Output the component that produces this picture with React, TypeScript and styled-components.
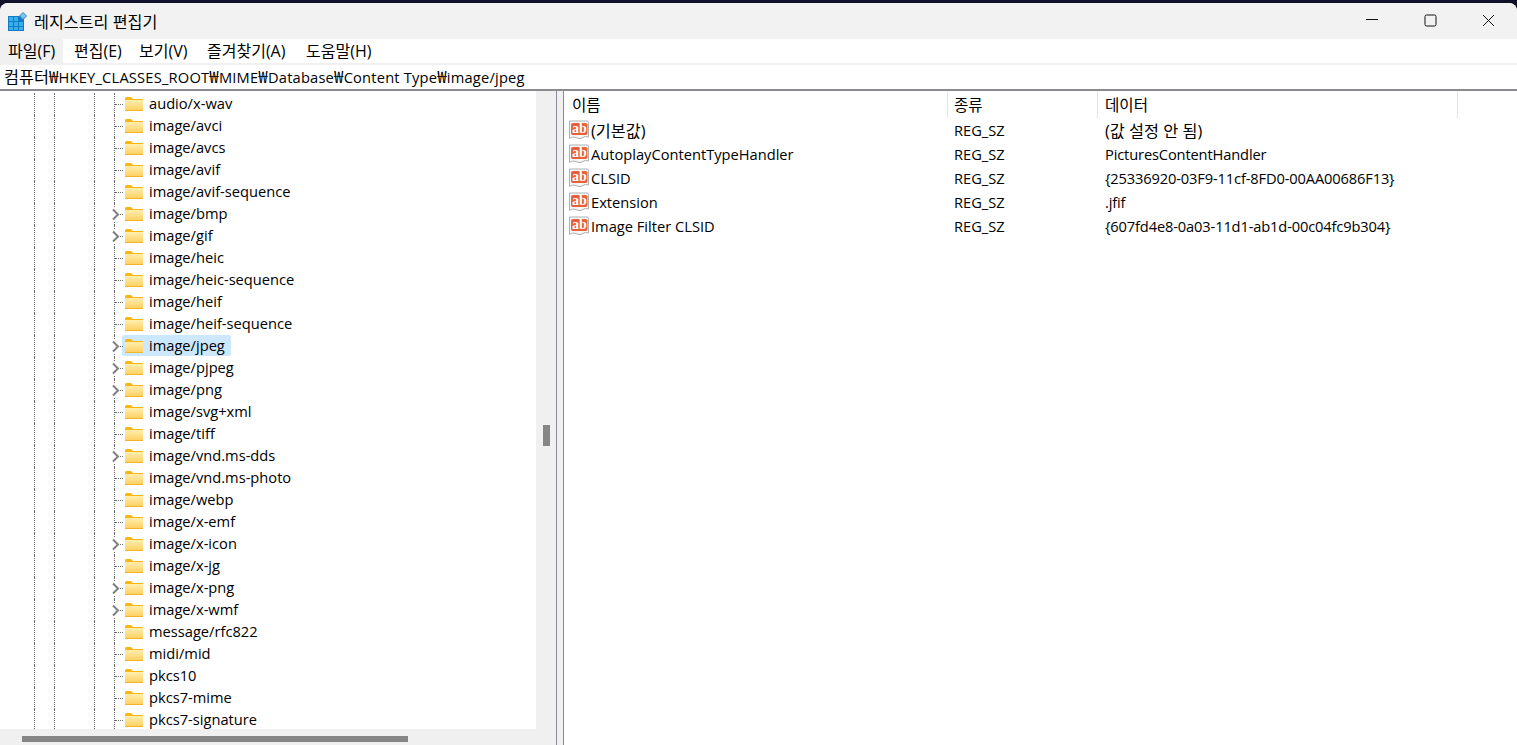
import React from 'react';
import styled, { createGlobalStyle } from 'styled-components';

const UI_FONT = `"Open Sans", "Noto Sans CJK KR", "Noto Sans", sans-serif`;

const GlobalStyle = createGlobalStyle`
    html, body, #root {
        margin: 0;
        height: 100%;
        overflow: hidden;
    }
    body {
        font-family: ${UI_FONT};
        color: #000;
        background: #101028;
    }
`

const Screen = styled.div`
    height: 100vh;
    padding-top: 3px;
    box-sizing: border-box;
    display: flex;
    flex-direction: column;
`

const Window = styled.div`
    flex: 1;
    min-height: 0;
    display: flex;
    flex-direction: column;
    background: #fff;
    border-radius: 8px 8px 0 0;
`

const TitleBar = styled.div`
    height: 36px;
    flex: none;
    display: flex;
    align-items: center;
    background: #f2f2f2;
    border-radius: 8px 8px 0 0;
    padding-left: 8px;
`

const AppTitle = styled.span`
    margin-left: 7px;
    font-size: 16.2px;
`

const WindowControls = styled.div`
    margin-left: auto;
    display: flex;
    height: 100%;
`

const WindowButton = styled.div<{ $width: number }>`
    width: ${p => p.$width}px;
    display: flex;
    align-items: center;
    justify-content: center;
    padding-bottom: 2px;
    box-sizing: border-box;
`

const MenuBar = styled.div`
    height: 24px;
    flex: none;
    display: flex;
    gap: 3px;
    background: #fff;
    border-bottom: 2px solid #f0f0f0;
`

const MenuItem = styled.div<{ $width: number; $active?: boolean }>`
    width: ${p => p.$width}px;
    padding-left: 8px;
    box-sizing: border-box;
    font-size: 16px;
    line-height: 24px;
    white-space: nowrap;
    background: ${p => (p.$active ? '#f0f0f0' : 'transparent')};
`

const AddressBar = styled.div`
    height: 26px;
    flex: none;
    padding-left: 4px;
    font-size: 14.67px;
    letter-spacing: 0.2px;
    line-height: 24px;
    white-space: nowrap;
    border-bottom: 2px solid #8a8a92;
    box-sizing: border-box;
`

const Hangul = styled.span`
    font-size: 16.3px;
    letter-spacing: 0;
`

const Won = styled.span`
    font-size: 17px;
    line-height: 1;
`

const Main = styled.div`
    flex: 1;
    min-height: 0;
    display: flex;
`

const TreePane = styled.div`
    width: 556px;
    flex: none;
    display: flex;
    flex-direction: column;
    background: #f0f0f0;
`

const TreeBody = styled.div`
    flex: 1;
    min-height: 0;
    display: flex;
`

const TreeList = styled.div`
    flex: 1;
    min-width: 0;
    background: #fff;
    padding-top: 2px;
    overflow: hidden;
`

const VScrollTrack = styled.div`
    width: 20px;
    flex: none;
    display: flex;
    justify-content: center;
    padding-top: 334px;
    box-sizing: border-box;
`

const VScrollThumb = styled.div`
    width: 7px;
    height: 21px;
    background: #868686;
`

const HScrollTrack = styled.div`
    height: 16px;
    flex: none;
    padding: 7px 0 0 22px;
    box-sizing: border-box;
`

const HScrollThumb = styled.div`
    width: 386px;
    height: 6px;
    background: #868686;
`

const Row = styled.div`
    height: 22px;
    display: flex;
    padding-left: 34px;
`

const Guide = styled.div<{ $width: number }>`
    width: ${p => p.$width}px;
    flex: none;
    box-sizing: border-box;
    border-left: 1px dotted #6e6e6e;
`

const Branch = styled.div`
    position: relative;
    width: 8px;
    flex: none;
    box-sizing: border-box;
    border-left: 1px dotted #6e6e6e;
    &::after {
        content: '';
        position: absolute;
        left: 0;
        top: 11px;
        width: 8px;
        border-top: 1px dotted #6e6e6e;
    }
`

const Expander = styled.svg`
    position: absolute;
    z-index: 1;
    left: -4px;
    top: 5px;
    background: #fff;
`

const Node = styled.div<{ $selected?: boolean }>`
    height: 21px;
    display: flex;
    align-items: center;
    gap: 6px;
    padding: 0 6px 0 3px;
    border-radius: 2px;
    background: ${p => (p.$selected ? '#cce8ff' : 'transparent')};
`

const NodeLabel = styled.span`
    font-size: 14.67px;
    white-space: nowrap;
    line-height: 21px;
`

const Splitter = styled.div`
    width: 8px;
    flex: none;
    box-sizing: border-box;
    background: #f0f0f0;
    border-left: 1px solid #8a8a9a;
    border-right: 1px solid #8a8a9a;
`

const ListPane = styled.div`
    flex: 1;
    min-width: 0;
    background: #fff;
`

const Columns = styled.div`
    display: grid;
    grid-template-columns: 384px 150px 360px;
`

const HeaderCell = styled.div<{ $indent: number }>`
    height: 27px;
    box-sizing: border-box;
    padding-left: ${p => p.$indent}px;
    font-size: 15.6px;
    line-height: 28px;
    border-right: 1px solid #e5e5e5;
`

const ValueRow = styled(Columns)`
    height: 24px;
    align-items: center;
    font-size: 14.67px;
`

const ValueName = styled.div`
    display: flex;
    align-items: center;
    gap: 2px;
    padding-left: 5px;
    white-space: nowrap;
`

const ValueCell = styled.div`
    padding-left: 6px;
    white-space: nowrap;
`

const DataCell = styled.div`
    padding-left: 7px;
    white-space: nowrap;
    letter-spacing: -0.14px;
`

const AbGlyph = styled.text`
    font-family: "Liberation Serif", serif;
    font-weight: 700;
    font-size: 14px;
    fill: #fff;
`

function RegeditLogo() {
    return (
        <svg width="19" height="19" viewBox="0 0 19 19">
            <rect x="0" y="4" width="16" height="15" fill="#1479c4" />
            <g fill="#35b0ec">
                <rect x="1" y="5" width="4" height="4" />
                <rect x="6" y="5" width="4" height="4" />
                <rect x="1" y="10" width="4" height="4" />
                <rect x="6" y="10" width="4" height="4" />
                <rect x="11" y="10" width="4" height="4" />
                <rect x="1" y="15" width="4" height="3" />
                <rect x="6" y="15" width="4" height="3" />
                <rect x="11" y="15" width="4" height="3" />
            </g>
            <path d="M15 0.5 L18.5 4 L15 7.5 L11.5 4 Z" fill="#7fc4ea" stroke="#2f86c4" strokeWidth="1" />
        </svg>
    )
}

function FolderIcon() {
    return (
        <svg width="18" height="14" viewBox="0 0 18 14">
            <defs>
                <linearGradient id="folderBody" x1="0" y1="0" x2="0" y2="1">
                    <stop offset="0" stopColor="#ffeeb0" />
                    <stop offset="1" stopColor="#fdd163" />
                </linearGradient>
            </defs>
            <path d="M0 1.5 Q0 0 1.5 0 H6 L8 2 H18 V4 H0 Z" fill="#f8b617" />
            <rect x="0" y="3" width="18" height="10" fill="url(#folderBody)" />
            <rect x="0" y="13" width="18" height="1" fill="#f3b32b" />
        </svg>
    )
}

function Chevron() {
    return (
        <Expander width="9" height="13" viewBox="0 0 9 13">
            <path d="M2 1.5 L7 6.5 L2 11.5" fill="none" stroke="#808080" strokeWidth="2" />
        </Expander>
    )
}

function StringIcon() {
    return (
        <svg width="20" height="20" viewBox="0 0 20 20">
            <path
                d="M0.5 1 H18 Q19.5 1 19.5 2.5 V17 Q16 15.5 13 18 Q10 19.5 7 17.5 Q4 16 0.5 18.5 Z"
                fill="#f7f7f7"
                stroke="#b0b0b0"
                strokeWidth="1"
            />
            <rect x="2" y="3" width="16.5" height="12" rx="2" fill="#e8603a" />
            <AbGlyph x="3" y="13">ab</AbGlyph>
        </svg>
    )
}

const treeItems: { name: string; expandable?: boolean; selected?: boolean }[] = [
    { name: 'audio/x-wav' },
    { name: 'image/avci' },
    { name: 'image/avcs' },
    { name: 'image/avif' },
    { name: 'image/avif-sequence' },
    { name: 'image/bmp', expandable: true },
    { name: 'image/gif', expandable: true },
    { name: 'image/heic' },
    { name: 'image/heic-sequence' },
    { name: 'image/heif' },
    { name: 'image/heif-sequence' },
    { name: 'image/jpeg', expandable: true, selected: true },
    { name: 'image/pjpeg', expandable: true },
    { name: 'image/png', expandable: true },
    { name: 'image/svg+xml' },
    { name: 'image/tiff' },
    { name: 'image/vnd.ms-dds', expandable: true },
    { name: 'image/vnd.ms-photo' },
    { name: 'image/webp' },
    { name: 'image/x-emf' },
    { name: 'image/x-icon', expandable: true },
    { name: 'image/x-jg' },
    { name: 'image/x-png', expandable: true },
    { name: 'image/x-wmf', expandable: true },
    { name: 'message/rfc822' },
    { name: 'midi/mid' },
    { name: 'pkcs10' },
    { name: 'pkcs7-mime' },
    { name: 'pkcs7-signature' },
];

const values = [
    { name: <Hangul>(기본값)</Hangul>, type: 'REG_SZ', data: <Hangul>(값 설정 안 됨)</Hangul>, key: 'default' },
    { name: 'AutoplayContentTypeHandler', type: 'REG_SZ', data: 'PicturesContentHandler', key: 'autoplay' },
    { name: 'CLSID', type: 'REG_SZ', data: '{25336920-03F9-11cf-8FD0-00AA00686F13}', key: 'clsid' },
    { name: 'Extension', type: 'REG_SZ', data: '.jfif', key: 'ext' },
    { name: 'Image Filter CLSID', type: 'REG_SZ', data: '{607fd4e8-0a03-11d1-ab1d-00c04fc9b304}', key: 'filter' },
];

const menus = [
    { label: '파일(F)', width: 63, active: true },
    { label: '편집(E)', width: 62 },
    { label: '보기(V)', width: 65 },
    { label: '즐겨찾기(A)', width: 96 },
    { label: '도움말(H)', width: 90 },
];

const addressPath = ['HKEY_CLASSES_ROOT', 'MIME', 'Database', 'Content Type', 'image/jpeg'];

function App() {
    return (
        <Screen>
            <GlobalStyle />
            <Window>
                <TitleBar>
                    <RegeditLogo />
                    <AppTitle>레지스트리 편집기</AppTitle>
                    <WindowControls>
                        <WindowButton $width={59}>
                            <svg width="12" height="12" viewBox="0 0 12 12">
                                <path d="M0 5.5 H12" stroke="#111" strokeWidth="1" />
                            </svg>
                        </WindowButton>
                        <WindowButton $width={59}>
                            <svg width="13" height="13" viewBox="0 0 13 13">
                                <rect x="1" y="1" width="11" height="11" rx="1.5" fill="none" stroke="#111" strokeWidth="1" />
                            </svg>
                        </WindowButton>
                        <WindowButton $width={57}>
                            <svg width="13" height="13" viewBox="0 0 13 13">
                                <path d="M1 1 L12 12 M12 1 L1 12" stroke="#111" strokeWidth="1" />
                            </svg>
                        </WindowButton>
                    </WindowControls>
                </TitleBar>
                <MenuBar>
                    {menus.map(m => (
                        <MenuItem key={m.label} $width={m.width} $active={m.active}>{m.label}</MenuItem>
                    ))}
                </MenuBar>
                <AddressBar>
                    <Hangul>컴퓨터</Hangul>
                    {addressPath.map(part => (
                        <React.Fragment key={part}><Won>₩</Won>{part}</React.Fragment>
                    ))}
                </AddressBar>
                <Main>
                    <TreePane>
                        <TreeBody>
                            <TreeList>
                                {treeItems.map(item => (
                                    <Row key={item.name}>
                                        <Guide $width={20} />
                                        <Guide $width={40} />
                                        <Guide $width={20} />
                                        <Branch>{item.expandable && <Chevron />}</Branch>
                                        <Node $selected={item.selected}>
                                            <FolderIcon />
                                            <NodeLabel>{item.name}</NodeLabel>
                                        </Node>
                                    </Row>
                                ))}
                            </TreeList>
                            <VScrollTrack>
                                <VScrollThumb />
                            </VScrollTrack>
                        </TreeBody>
                        <HScrollTrack>
                            <HScrollThumb />
                        </HScrollTrack>
                    </TreePane>
                    <Splitter />
                    <ListPane>
                        <Columns>
                            <HeaderCell $indent={8}>이름</HeaderCell>
                            <HeaderCell $indent={6}>종류</HeaderCell>
                            <HeaderCell $indent={7}>데이터</HeaderCell>
                        </Columns>
                        {values.map(v => (
                            <ValueRow key={v.key}>
                                <ValueName>
                                    <StringIcon />
                                    {v.name}
                                </ValueName>
                                <ValueCell>{v.type}</ValueCell>
                                <DataCell>{v.data}</DataCell>
                            </ValueRow>
                        ))}
                    </ListPane>
                </Main>
            </Window>
        </Screen>
    )
}

export default App;
